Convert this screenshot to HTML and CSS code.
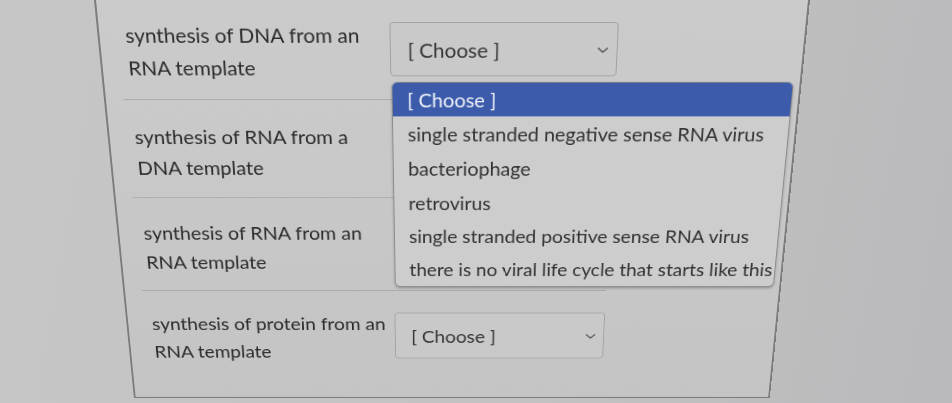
FILE: index.html
```html
<!DOCTYPE html>
<html lang="en">
<head>
    <meta charset="UTF-8">
    <meta name="viewport" content="width=device-width, initial-scale=1.0">
    <title>Matching question</title>
    <link rel="stylesheet" href="styles.css">
</head>
<body>
    <div class="scene">
        <div class="quiz">
            <div class="match-row">
                <div class="match-label">synthesis of DNA from an RNA template</div>
                <div class="select-wrap">
                    <div class="select">
                        <span>[ Choose ]</span>
                        <svg class="chevron" width="12" height="8" viewBox="0 0 12 8"><path d="M1 1.5 L6 6 L11 1.5" fill="none" stroke="#555" stroke-width="1.6"/></svg>
                    </div>
                    <!-- open dropdown list -->
                    <ul class="options">
                        <li class="option active">[ Choose ]</li>
                        <li class="option">single stranded negative sense RNA virus</li>
                        <li class="option">bacteriophage</li>
                        <li class="option">retrovirus</li>
                        <li class="option">single stranded positive sense RNA virus</li>
                        <li class="option">there is no viral life cycle that starts like this</li>
                    </ul>
                </div>
            </div>

            <div class="match-row">
                <div class="match-label">synthesis of RNA from a DNA template</div>
            </div>

            <div class="match-row">
                <div class="match-label">synthesis of RNA from an RNA template</div>
            </div>

            <div class="match-row">
                <div class="match-label">synthesis of protein from an RNA template</div>
                <div class="select-wrap">
                    <div class="select">
                        <span>[ Choose ]</span>
                        <svg class="chevron" width="12" height="8" viewBox="0 0 12 8"><path d="M1 1.5 L6 6 L11 1.5" fill="none" stroke="#555" stroke-width="1.6"/></svg>
                    </div>
                </div>
            </div>
        </div>
    </div>
</body>
</html>
```

FILE: styles.css
```css
* {
    margin: 0;
    padding: 0;
    box-sizing: border-box;
}

html,
body {
    width: 952px;
    height: 403px;
    overflow: hidden;
}

body {
    font-family: Lato, "Open Sans", sans-serif;
    background: linear-gradient(100deg, #c6c6c6 0%, #c2c2c3 60%, #b9b9bb 100%);
    color: #333;
}

/* the screen was photographed at a slight angle */
.scene {
    display: flow-root;
    width: 952px;
    height: 403px;
    transform-origin: 451px 0;
    transform: perspective(1000px) rotateX(-15.7deg);
}

.quiz {
    margin: -4px 0 0 94px;
    width: 716px;
    height: 470px;
    padding-left: 18px;
    border: 2px solid #7c7c7c;
    border-top: none;
    background: linear-gradient(180deg, #cbcbcb 0%, #c4c4c4 100%);
}

.match-row {
    display: flex;
    align-items: flex-start;
    width: 506px;
    height: 111px;
    padding-top: 24px;
    border-bottom: 1px solid #a8a8a8;
}

.match-row:last-child {
    border-bottom: none;
}

.match-label {
    width: 275px;
    padding: 0 4px 0 8px;
    font-size: 21px;
    line-height: 34.5px;
    color: #2b2b2b;
}

.select-wrap {
    position: relative;
    width: 231px;
    margin-top: 3px;
}

.select {
    display: flex;
    align-items: center;
    justify-content: space-between;
    height: 58px;
    padding: 0 8px 0 17px;
    border: 1px solid #a2a2a2;
    border-radius: 4px;
    background: #c9c9c9;
    font-size: 21px;
    color: #353535;
}

.chevron {
    margin-top: 2px;
}

.options {
    position: absolute;
    top: calc(100% + 6px);
    left: 1px;
    width: 412px;
    list-style: none;
    background: #cdcdcd;
    border: 1px solid #8c8c8c;
    border-radius: 6px;
    overflow: hidden;
    box-shadow: 0 2px 3px rgba(0, 0, 0, 0.25);
}

.option {
    display: flex;
    align-items: center;
    height: 39.5px;
    padding-left: 15px;
    font-size: 20.6px;
    color: #323232;
    white-space: nowrap;
}

.option.active {
    height: 37px;
    background: #3c5cab;
    color: #eef1f8;
}
```
